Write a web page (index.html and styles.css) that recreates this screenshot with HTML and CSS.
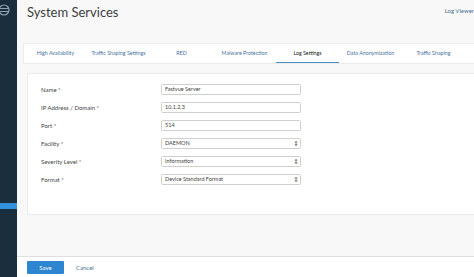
FILE: index.html
```html
<!DOCTYPE html>
<html>
<head>
<meta charset="utf-8">
<link rel="stylesheet" href="styles.css">
</head>
<body>
<div class="app">
  <aside class="sidebar">
    <svg class="globe" width="12" height="12" viewBox="0 0 12 12">
      <circle cx="4" cy="6" r="5" fill="none" stroke="#8fa3b3" stroke-width="1.2"/>
      <line x1="-1" y1="4.5" x2="9" y2="4.5" stroke="#8fa3b3" stroke-width="1"/>
      <line x1="-1" y1="7.5" x2="9" y2="7.5" stroke="#8fa3b3" stroke-width="1"/>
    </svg>
    <div class="side-active"></div>
  </aside>
  <main class="main">
    <header class="header">
      <h1 class="title">System Services</h1>
      <a class="log-viewer">Log Viewer</a>
    </header>
    <nav class="tabs">
      <span class="tab">High Availability</span>
      <span class="tab">Traffic Shaping Settings</span>
      <span class="tab">RED</span>
      <span class="tab">Malware Protection</span>
      <span class="tab active">Log Settings</span>
      <span class="tab">Data Anonymization</span>
      <span class="tab">Traffic Shaping</span>
    </nav>
    <section class="card">
      <div class="row"><label>Name *</label><div class="field">Fastvue Server</div></div>
      <div class="row"><label>IP Address / Domain *</label><div class="field">10.1.2.3</div></div>
      <div class="row"><label>Port *</label><div class="field">514</div></div>
      <div class="row"><label>Facility *</label><div class="field select">DAEMON<span class="arrows">&#8597;</span></div></div>
      <div class="row"><label>Severity Level *</label><div class="field select">Information<span class="arrows">&#8597;</span></div></div>
      <div class="row"><label>Format *</label><div class="field select">Device Standard Format<span class="arrows">&#8597;</span></div></div>
    </section>
    <div class="spacer"></div>
    <footer class="footer">
      <button class="save">Save</button>
      <span class="cancel">Cancel</span>
    </footer>
  </main>
</div>
</body>
</html>
```
FILE: styles.css
```css
html, body {
  margin: 0;
  padding: 0;
  width: 474px;
  height: 277px;
  overflow: hidden;
  font-family: Lato, "Liberation Sans", sans-serif;
}
.app {
  display: flex;
  height: 277px;
}
.sidebar {
  width: 17px;
  flex: none;
  background: #1a2e3d;
  position: relative;
}
.globe {
  position: absolute;
  left: 0;
  top: 4px;
}
.side-active {
  position: absolute;
  left: 0;
  top: 203px;
  width: 17px;
  height: 6px;
  background: #3191dc;
}
.main {
  flex: 1;
  background: #f8f8f8;
  display: flex;
  flex-direction: column;
  min-width: 0;
}
.header {
  height: 43px;
  flex: none;
  display: flex;
  justify-content: space-between;
  align-items: flex-start;
  padding-left: 10px;
}
.title {
  margin: 4px 0 0;
  font-size: 13px;
  font-weight: 400;
  color: #3d3d3d;
}
.log-viewer {
  font-size: 6px;
  color: #4d6f8f;
  margin-top: 7px;
  white-space: nowrap;
}
.tabs {
  margin-left: 6px;
  height: 19px;
  flex: none;
  background: #fff;
  border: 1px solid #ececec;
  border-right: none;
  display: flex;
}
.tab {
  width: 63px;
  flex: none;
  text-align: center;
  font-size: 5.3px;
  line-height: 19px;
  color: #4a74a0;
  white-space: nowrap;
  box-sizing: border-box;
}
.tab.active {
  color: #222;
  border-bottom: 1.5px solid #4a8fc4;
}
.card {
  margin: 9px 0 0 10px;
  height: 134px;
  flex: none;
  background: #fff;
  border: 1px solid #ebebeb;
  border-right: none;
  padding-top: 6px;
}
.row {
  display: flex;
  align-items: center;
  height: 18px;
}
.row label {
  width: 120px;
  flex: none;
  padding-left: 13px;
  font-size: 6px;
  color: #444;
}
.field {
  width: 135px;
  height: 9px;
  border: 1px solid #cfcfcf;
  border-radius: 1.5px;
  font-size: 5.5px;
  line-height: 9px;
  padding-left: 3px;
  color: #444;
  position: relative;
}
.arrows {
  position: absolute;
  right: 2px;
  top: 0;
  font-size: 5px;
  color: #555;
  font-weight: 700;
}
.spacer {
  flex: 1;
}
.footer {
  height: 20px;
  flex: none;
  background: #fff;
  border-top: 1px solid #e0e0e0;
  display: flex;
  align-items: center;
  padding-left: 10px;
}
.save {
  width: 37px;
  height: 13px;
  border: none;
  border-radius: 1px;
  background: #2d86cf;
  color: #fff;
  font-family: Lato, "Liberation Sans", sans-serif;
  font-size: 6px;
  padding: 0;
}
.cancel {
  margin-left: 12px;
  font-size: 6px;
  color: #4d6f8f;
}
```
